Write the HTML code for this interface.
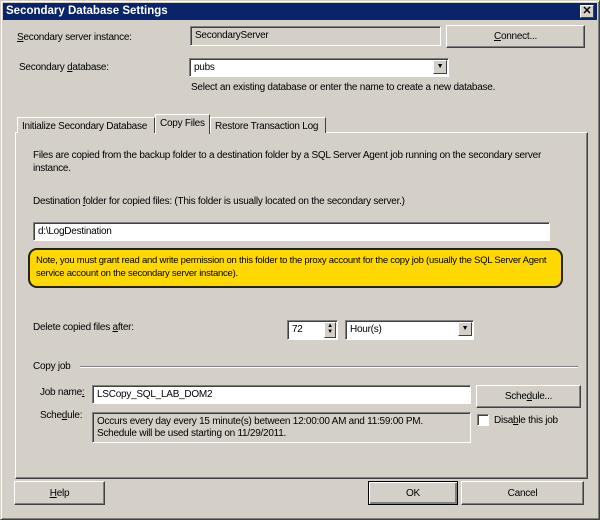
<!DOCTYPE html><html><head><style>
*{margin:0;padding:0;box-sizing:border-box}
body{width:600px;height:520px;background:#d4d0c8;font-family:"Liberation Sans",sans-serif;font-size:10px;letter-spacing:-0.25px;color:#000;position:relative;overflow:hidden}
.a{position:absolute;white-space:nowrap}
.win{position:absolute;left:0;top:0;width:600px;height:520px;border:1px solid;border-color:#d4d0c8 #404040 #404040 #d4d0c8;box-shadow:inset 1px 1px #fff,inset -1px -1px #808080}
.title{position:absolute;left:3px;top:3px;width:594px;height:17px;background:#0a246a;color:#fff;font-weight:bold;font-size:11.5px;letter-spacing:0;padding:2px 3px}
.close{position:absolute;right:3px;top:2px;width:14px;height:13px;background:#d4d0c8;border:1px solid;border-color:#fff #404040 #404040 #fff;color:#000;font-size:11px;line-height:10px;text-align:center;font-weight:bold}
.sunk{position:absolute;background:#fff;border:1px solid;border-color:#808080 #fff #fff #808080;box-shadow:inset 1px 1px #404040;padding:3px 4px;white-space:nowrap}
.btn{position:absolute;background:#d4d0c8;border:1px solid;border-color:#fff #404040 #404040 #fff;box-shadow:inset -1px -1px #808080;text-align:center}
.arr{position:absolute;right:2px;top:2px;width:14px;height:14px;background:#d4d0c8;border:1px solid;border-color:#fff #404040 #404040 #fff;font-size:7px;text-align:center;line-height:12px}
.tab{position:absolute;border:1px solid;border-color:#fff #404040 transparent #fff;border-bottom:none;padding:3px 4px;background:#d4d0c8;white-space:nowrap}
u{text-decoration:underline}
</style></head><body>
<div class="win"></div>
<div class="title">Secondary Database Settings<div class="close">✕</div></div>
<div class="a" style="left:17px;top:32px"><u>S</u>econdary server instance:</div>
<div class="sunk" style="left:190px;top:26px;width:251px;height:20px;background:#d4d0c8">SecondaryServer</div>
<div class="btn" style="left:446px;top:25px;width:139px;height:23px;padding-top:5px"><u>C</u>onnect...</div>
<div class="a" style="left:19px;top:62px">Secondary <u>d</u>atabase:</div>
<div class="sunk" style="left:189px;top:58px;width:260px;height:19px">pubs<div class="arr" style="top:1px;right:1px">▼</div></div>
<div class="a" style="left:191px;top:82px">Select an existing database or enter the name to create a new database.</div>
<div class="a" style="left:15px;top:132px;width:573px;height:347px;border:1px solid;border-color:#fff #404040 #404040 #fff;box-shadow:inset -1px -1px #808080"></div>
<div class="tab" style="left:17px;top:117px;width:138px;height:16px">Initialize Secondary Database</div>
<div class="tab" style="left:210px;top:117px;width:116px;height:16px">Restore Transaction Log</div>
<div class="tab" style="left:155px;top:114px;width:55px;height:20px;z-index:2">Copy Files</div>
<div class="a" style="left:33px;top:150px">Files are copied from the backup folder to a destination folder by a SQL Server Agent job running on the secondary server</div>
<div class="a" style="left:33px;top:163px">instance.</div>
<div class="a" style="left:33px;top:196px">Destination <u>f</u>older for copied files: (This folder is usually located on the secondary server.)</div>
<div class="sunk" style="left:33px;top:222px;width:517px;height:19px">d:\LogDestination</div>
<div class="a" style="left:28px;top:248px;width:535px;height:40px;background:#ffd800;border:2px solid #222;border-radius:9px;padding:4px 6px;white-space:normal;line-height:13px;font-size:9.5px">Note, you must grant read and write permission on this folder to the proxy account for the copy job (usually the SQL Server Agent service account on the secondary server instance).</div>
<div class="a" style="left:33px;top:322px">Delete copied files <u>a</u>fter:</div>
<div class="sunk" style="left:287px;top:320px;width:51px;height:20px">72<div class="arr" style="top:1px;right:1px;width:12px;height:16px;line-height:6px;font-size:6px">▲<br>▼</div></div>
<div class="sunk" style="left:345px;top:320px;width:129px;height:20px">Hour(s)<div class="arr" style="top:1px;right:1px">▼</div></div>
<div class="a" style="left:33px;top:361px">Copy job</div>
<div class="a" style="left:80px;top:366px;width:498px;height:2px;border-top:1px solid #808080;border-bottom:1px solid #fff"></div>
<div class="a" style="left:40px;top:387px">Job name<u>:</u></div>
<div class="sunk" style="left:92px;top:385px;width:379px;height:19px">LSCopy_SQL_LAB_DOM2</div>
<div class="btn" style="left:476px;top:385px;width:105px;height:23px;padding-top:5px">Sche<u>d</u>ule...</div>
<div class="a" style="left:40px;top:410px">Sche<u>d</u>ule:</div>
<div class="sunk" style="left:92px;top:412px;width:379px;height:31px;background:#d4d0c8;line-height:12px">Occurs every day every 15 minute(s) between 12:00:00 AM and 11:59:00 PM.<br>Schedule will be used starting on 11/29/2011.</div>
<div class="sunk" style="left:477px;top:414px;width:12px;height:12px;padding:0"></div>
<div class="a" style="left:494px;top:415px">Disa<u>b</u>le this job</div>
<div class="btn" style="left:14px;top:481px;width:91px;height:24px;padding-top:6px"><u>H</u>elp</div>
<div class="btn" style="left:368px;top:481px;width:90px;height:24px;padding-top:6px;border-color:#000;box-shadow:inset 1px 1px #fff,inset -2px -2px #808080">OK</div>
<div class="btn" style="left:461px;top:481px;width:123px;height:24px;padding-top:6px">Cancel</div>
</body></html>
